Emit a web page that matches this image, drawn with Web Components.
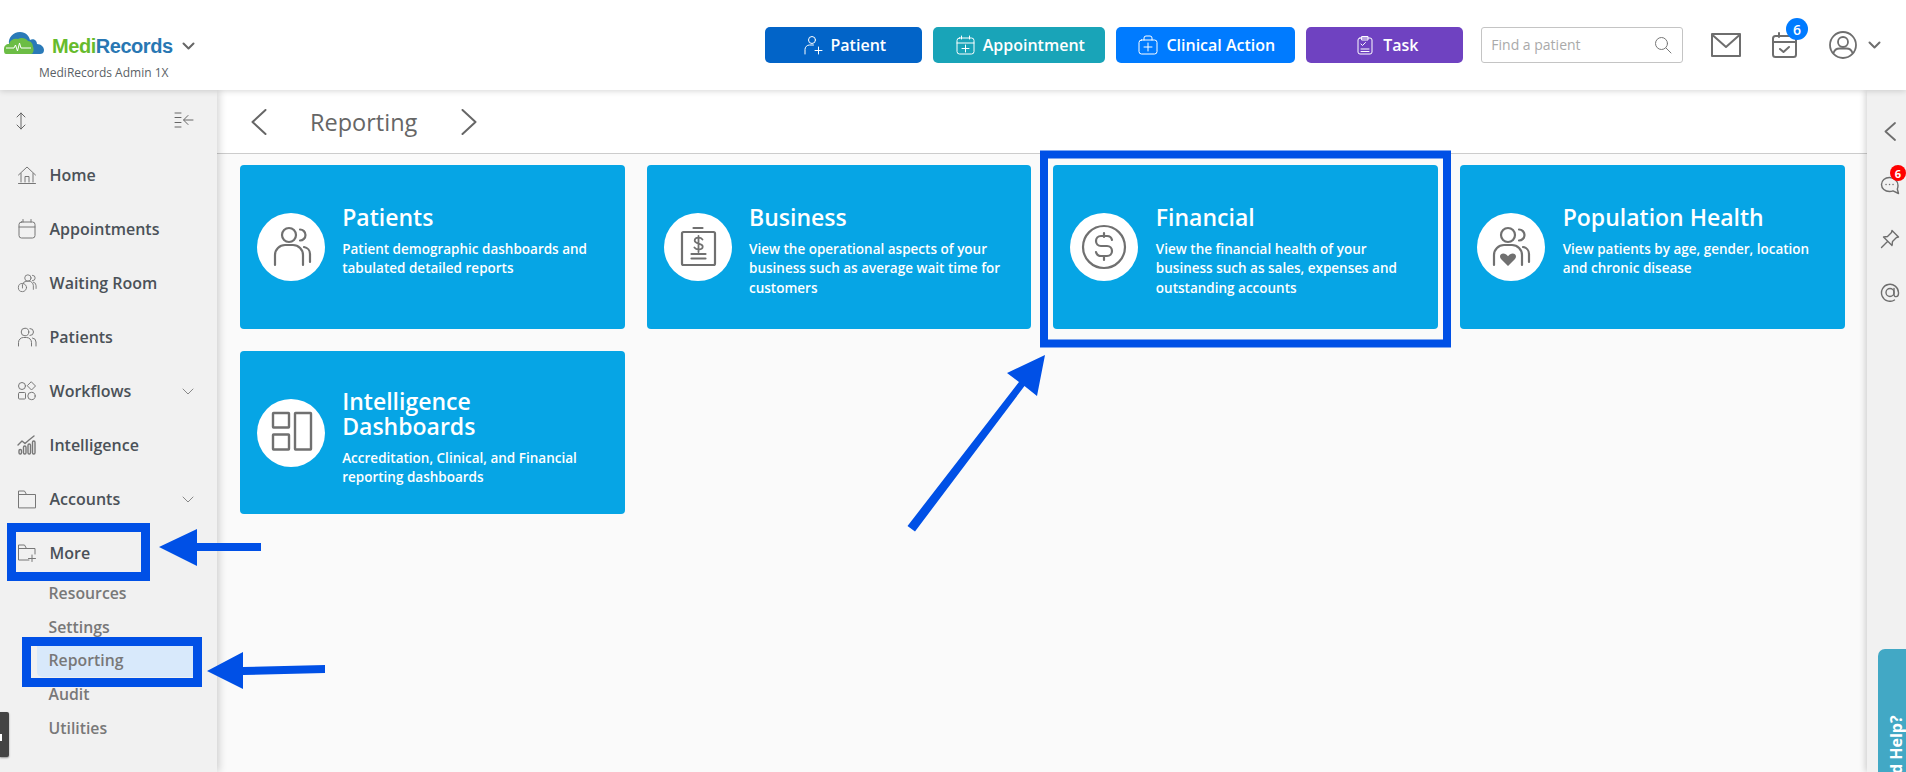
<!DOCTYPE html>
<html>
<head>
<meta charset="utf-8">
<title>Reporting</title>
<style>
    html, body { margin: 0; height: 100%; overflow: hidden; background: #fafafa; }
    body { display: flex; flex-direction: column; font-family: "Open Sans", "Noto Sans", sans-serif; }
    .below { flex: 1; display: flex; min-height: 0; }
</style>
</head>
<body>
<app-header></app-header>
<div class="below">
    <side-nav></side-nav>
    <report-page></report-page>
    <right-rail></right-rail>
</div>
<annotation-layer></annotation-layer>

<script>
const svg = (w, h, body, vb) => `<svg width="${w}" height="${h}" viewBox="${vb || `0 0 ${w} ${h}`}" fill="none" stroke="currentColor" stroke-linecap="round" stroke-linejoin="round">${body}</svg>`

const NAV_ICONS = {
    home: svg(20, 20, `<path d="M1.5 10 10 2l8.500 8M4 8.500V17M16 8.500V17M8 17v-5.500h4V17M1.500 18.500h17"/>`),
    appointments: svg(20, 22, `<rect x="2" y="4" width="16" height="16" rx="2.500"/><path d="M2 9h16M6 1.500V4M14 1.500V4"/>`),
    waiting: svg(22, 22, `<circle cx="12" cy="5.500" r="3.500"/><path d="M17 2.500a3 3 0 0 1 0 6M6 14v-1a5 5 0 0 1 5-4h2a5 5 0 0 1 5 5v4M18 10a4 4 0 0 1 3 4v3"/><circle cx="6" cy="16" r="4.500"/><path d="M6 14v2.500"/>`),
    patients: svg(20, 20, `<circle cx="8" cy="5" r="3.800"/><path d="M13 1.500a3.500 3.500 0 0 1 0 7M1.500 19v-3.500A5 5 0 0 1 6.500 10.500h3A5 5 0 0 1 14.500 15.500V19M15.500 11a4 4 0 0 1 3.500 4v4"/>`),
    workflows: svg(20, 20, `<circle cx="5" cy="5" r="3.500"/><path d="m14.500 1 4 4-4 4-4-4z"/><rect x="1.500" y="11.500" width="7" height="6.500" rx="1"/><circle cx="14.500" cy="15" r="3.700"/>`),
    intelligence: svg(20, 20, `<g stroke-width="1.400"><path d="M1 10l4-4 3 2.500 4-3.500 5-4"/><rect x="2" y="14.500" width="2.500" height="4.500" rx="1.200"/><rect x="6.500" y="11" width="2.500" height="8" rx="1.200"/><rect x="11" y="9" width="2.500" height="10" rx="1.200"/><rect x="15.500" y="6" width="2.500" height="13" rx="1.200"/></g>`),
    accounts: svg(20, 20, `<path d="M1.500 18.500V2h6l2 3.500h9v13zM1.500 5.500h8"/>`),
    more: svg(20, 20, `<path d="M12 17H1.500V2h6l2 3.500h8.500V11M1.500 5.500h8M15 12v6.500M11.500 15.500H18.500"/>`)
}

const CARD_ICONS = {
    patients: `<g stroke-width="2.200"><circle cx="32" cy="22" r="7"/><path d="M18 52V42a10 10 0 0 1 10-10h8a10 10 0 0 1 10 10v10M43 16.500a5.500 5.500 0 0 1 0 11M47 34a7 7 0 0 1 6 7v8"/></g>`,
    business: `<g stroke-width="2.200"><rect x="18" y="19" width="33" height="33" rx="1.500"/><path d="M29.500 15h9M27.500 41h14M27.500 45.500h14"/><path stroke-width="1.800" d="M38.500 26.500c-1-1.300-2.500-1.800-4-1.800-2.200 0-3.800 1.100-3.800 2.900 0 4 8 2 8 6 0 1.800-1.800 2.900-4 2.900-1.700 0-3.300-.6-4.300-2M34.500 23v16"/></g>`,
    financial: `<g stroke-width="2.200"><circle cx="34" cy="34" r="21"/><path d="M42 27c-.6-2.700-2.800-4-5-4h-6c-3 0-5 2.200-5 5s2 5 5 5h6c3 0 5 2.200 5 5s-2 5-5 5h-6c-2.400 0-4.500-1.400-5-4M34 20v4M34 43v4"/></g>`,
    population: `<g stroke-width="2.200"><circle cx="31" cy="22" r="7"/><path d="M17 52V42a10 10 0 0 1 10-10h8a10 10 0 0 1 10 10v10M42 16.500a5.500 5.500 0 0 1 0 11M46 34a7 7 0 0 1 6 7v8"/></g><path fill="currentColor" stroke="none" d="M31 53l-7-7c-2-2.200-.8-5.500 2.200-5.500 2 0 3.600 1 4.800 2.700 1.200-1.700 2.800-2.700 4.800-2.700 3 0 4.200 3.300 2.200 5.500z"/>`,
    dashboards: `<g stroke-width="2.400" stroke-linejoin="miter"><rect x="16" y="14" width="16" height="14.500" rx=".5"/><rect x="16" y="35.500" width="16" height="15" rx=".5"/><rect x="38" y="14" width="16" height="36.500" rx=".5"/></g>`
}

const BUTTON_ICONS = {
    patient: svg(19, 20, `<circle cx="8" cy="5" r="3.500"/><path d="M1 19v-4.500A4.500 4.500 0 0 1 5.500 10h4M11 15.500h7M14.500 12v7"/>`),
    appointment: svg(19, 20, `<rect x="1" y="3" width="17" height="16" rx="2.500"/><path d="M1 8h17M5.500 1v3M13.500 1v3M6 13.500h7M9.500 10v7"/>`),
    clinical: svg(20, 20, `<rect x="1" y="5" width="18" height="14" rx="2.500"/><path d="M6 5V3a2 2 0 0 1 2-2h4a2 2 0 0 1 2 2v2M6 12h8M10 8v8"/>`),
    task: svg(16, 20, `<rect x="1" y="3" width="14" height="16" rx="2"/><path d="M5 1.500h6V5H5zM4 9l1.500 1.500L8.500 7.500M4 14h8M4 16.500h8"/>`)
}

class AppHeader extends HTMLElement {
    constructor() {
        super()
        this.shadow = this.attachShadow({ mode: 'open' })
    }
    connectedCallback() {
        this.shadow.innerHTML = `
        <style>
            :host {
                display: flex;
                flex: none;
                height: 90px;
                position: relative;
                z-index: 3;
                background: #fff;
                box-shadow: 0 1px 6px rgba(0,0,0,.16);
                align-items: center;
                padding-right: 25px;
                box-sizing: border-box;
            }
            .brand { width: 200px; flex: none; align-self: flex-start; padding: 32px 0 0 4px; box-sizing: border-box; }
            .logo { display: flex; align-items: center; height: 28px; color: #666; }
            .logo > svg { align-self: flex-start; }
            .logo-name {
                font: bold 20px "Liberation Sans", sans-serif;
                letter-spacing: -.45px;
                margin-left: 8px;
                color: #2877b3;
            }
            .logo-name b { color: #66bb2c; }
            .logo .chev { margin-left: 9px; display: flex; }
            .org { font-size: 12px; color: #5a5f66; margin: 3.500px 0 0 35px; line-height: 17px; white-space: nowrap; }
            .actions { margin-left: auto; display: flex; align-items: center; }
            action-button + action-button { margin-left: 11px; }
            .search {
                width: 202px; height: 36px; box-sizing: border-box; margin-left: 18px;
                border: 1px solid #c4c4c4; border-radius: 3px;
                display: flex; align-items: center; padding: 0 10px 1px 9px;
                color: #aaa; font-size: 14px;
            }
            .search span { flex: 1; }
            .search svg { color: #777; }
            .ico { color: #6e6e6e; display: flex; }
            .mail { margin-left: 27.700px; }
            .cal { margin-left: 31px; position: relative; }
            .badge {
                position: absolute; left: 14px; top: -14px; width: 22px; height: 22px; border-radius: 50%;
                background: #007bff; color: #fff; font-size: 14px; font-weight: 600;
                display: flex; align-items: center; justify-content: center;
            }
            .user { margin-left: 32px; }
            .down { margin-left: 11px; }
        </style>
        <div class="brand">
            <div class="logo">
                <svg width="40" height="22" viewBox="0 0 40 22">
                    <path fill="#2a7ab8" d="M5 12C4 6 9 0 16 0c6 0 9 4 10 8 3-2 7 0 7 4 4 0 7 3 7 6 0 3-2 4-4 4H10z"/>
                    <path fill="#6cbd45" d="M2 22c-2 0-2-3-2-5 0-3 2-5 5-5 1-4 5-6 9-5 3-2 8-1 10 2 3 0 5 3 5 6 1 1 1 7-2 7z"/>
                    <path fill="none" stroke="#fff" stroke-width="1" d="M2 16h8l1.500-3 2 6 2-8 1.500 5h10"/>
                </svg>
                <span class="logo-name"><b>Medi</b>Records</span>
                <span class="chev">${svg(13, 8, `<path stroke-width="2" d="M1.500 1.500 6.500 6.500 11.500 1.500"/>`)}</span>
            </div>
            <div class="org">MediRecords Admin 1X</div>
        </div>
        <div class="actions">
            <action-button color="#0264c8" width="157" icon="patient" gap="8" shift="2">Patient</action-button>
            <action-button color="#19a4b8" width="172" icon="appointment" gap="8" shift="2">Appointment</action-button>
            <action-button color="#007bff" width="179" icon="clinical" gap="8" shift="2">Clinical Action</action-button>
            <action-button color="#6f42c1" width="157" icon="task" gap="10" shift="6">Task</action-button>
            <div class="search">
                <span>Find a patient</span>
                ${svg(18, 18, `<circle cx="7.500" cy="7.500" r="6"/><path d="m12 12 5 5"/>`)}
            </div>
            <div class="ico mail">${svg(30, 24, `<rect x="1" y="1" width="28" height="22" stroke-width="2"/><path stroke-width="2" d="M1.500 2 15 14 28.500 2"/>`)}</div>
            <div class="ico cal">
                ${svg(25, 26, `<rect x="1" y="4" width="23" height="21" rx="2.500" stroke-width="2"/><path stroke-width="2" d="M1 10h23M7 1v4M8 17l3.500 3L17 15"/>`)}
                <div class="badge">6</div>
            </div>
            <div class="ico user">${svg(28, 28, `<circle cx="14" cy="14" r="13" stroke-width="1.800"/><circle cx="14" cy="11" r="5" stroke-width="1.800"/><path stroke-width="1.800" d="M4.500 22c1-3.500 4-4.500 6-4.500h7c2 0 5 1 6 4.500"/>`)}</div>
            <div class="ico down">${svg(13, 8, `<path stroke-width="2" d="M1.500 1.500 6.500 6.500 11.500 1.500"/>`)}</div>
        </div>
        `
    }
}

class ActionButton extends HTMLElement {
    constructor() {
        super()
        this.shadow = this.attachShadow({ mode: 'open' })
    }
    connectedCallback() {
        this.shadow.innerHTML = `
        <style>
            :host {
                display: inline-flex;
                box-sizing: border-box;
                height: 36px;
                width: ${this.getAttribute('width')}px;
                padding-left: ${this.getAttribute('shift')}px;
                align-items: center;
                justify-content: center;
                gap: ${this.getAttribute('gap')}px;
                background: ${this.getAttribute('color')};
                color: #fff;
                border-radius: 5px;
                font-size: 16px;
                font-weight: 600;
            }
            svg { display: block; }
        </style>
        ${BUTTON_ICONS[this.getAttribute('icon')]}
        <slot></slot>
        `
    }
}

class NavItem extends HTMLElement {
    constructor() {
        super()
        this.shadow = this.attachShadow({ mode: 'open' })
    }
    connectedCallback() {
        const chevron = this.hasAttribute('expandable')
            ? `<span class="chev">${svg(12, 7, `<path d="M1 1l5 5 5-5"/>`)}</span>` : ''
        this.shadow.innerHTML = `
        <style>
            :host {
                display: flex;
                height: 54px;
                align-items: center;
                padding-left: 16.500px;
                color: #4b5158;
                font-size: 16px;
                font-weight: 600;
            }
            .icon { width: 20px; margin-right: 13px; color: #777; display: flex; justify-content: center; }
            .icon svg { display: block; }
            .chev { margin-left: auto; margin-right: 23px; color: #888; display: flex; }
        </style>
        <span class="icon">${NAV_ICONS[this.getAttribute('icon')]}</span>
        <slot></slot>
        ${chevron}
        `
    }
}

class SubItem extends HTMLElement {
    constructor() {
        super()
        this.shadow = this.attachShadow({ mode: 'open' })
    }
    connectedCallback() {
        this.shadow.innerHTML = `
        <style>
            :host {
                display: flex;
                height: 33.700px;
                align-items: center;
                margin-left: 37px;
                margin-right: 23px;
                padding-left: 11.500px;
                color: #787878;
                font-size: 15.800px;
                font-weight: 600;
                border-bottom-left-radius: 5px;
            }
            :host([active]) { background: #d8e9fb; }
        </style>
        <slot></slot>
        `
    }
}

class SideNav extends HTMLElement {
    constructor() {
        super()
        this.shadow = this.attachShadow({ mode: 'open' })
    }
    connectedCallback() {
        this.shadow.innerHTML = `
        <style>
            :host {
                display: block;
                flex: none;
                width: 217px;
                position: relative;
                z-index: 2;
                background: #f1f1f1;
                box-shadow: 2px 0 8px rgba(0,0,0,.18);
            }
            .tools {
                height: 58px;
                display: flex;
                justify-content: space-between;
                padding: 22px 23px 0 15px;
                box-sizing: border-box;
                color: #666;
            }
            .sub { margin-top: -4px; }
            .dock {
                position: absolute; left: 0; top: 622px; width: 9px; height: 45px;
                background: #444; border-radius: 0 2px 2px 0;
                box-shadow: 0 1px 2px rgba(0,0,0,.4);
            }
            .dock i { position: absolute; left: 0; top: 22px; width: 2px; height: 7px; background: #fff; }
        </style>
        <div class="tools">
            ${svg(12, 18, `<path d="M6 1v16M2 5l4-4 4 4M2 13l4 4 4-4"/>`)}
            ${svg(20, 16, `<path d="M1 1h6M1 5.500h6M1 10.500h6M1 15h6M19 8H10M14 3.500 9.500 8l4.500 4.500"/>`)}
        </div>
        <nav-item icon="home">Home</nav-item>
        <nav-item icon="appointments">Appointments</nav-item>
        <nav-item icon="waiting">Waiting Room</nav-item>
        <nav-item icon="patients">Patients</nav-item>
        <nav-item icon="workflows" expandable>Workflows</nav-item>
        <nav-item icon="intelligence">Intelligence</nav-item>
        <nav-item icon="accounts" expandable>Accounts</nav-item>
        <nav-item icon="more">More</nav-item>
        <div class="sub">
            <sub-item>Resources</sub-item>
            <sub-item>Settings</sub-item>
            <sub-item active>Reporting</sub-item>
            <sub-item>Audit</sub-item>
            <sub-item>Utilities</sub-item>
        </div>
        <div class="dock"><i></i></div>
        `
    }
}

class ReportCard extends HTMLElement {
    constructor() {
        super()
        this.shadow = this.attachShadow({ mode: 'open' })
    }
    connectedCallback() {
        this.shadow.innerHTML = `
        <style>
            :host {
                display: flex;
                align-items: center;
                background: #06a5e5;
                border-radius: 4px;
                color: #fff;
                padding-left: 17px;
            }
            .circle {
                flex: none;
                width: 68px;
                height: 68px;
                border-radius: 50%;
                background: #fff;
                color: #707070;
                margin-right: 17.500px;
            }
            .circle svg { display: block; }
            .text { align-self: flex-start; width: 256px; padding-top: var(--text-top, 39.500px); }
            h3 { margin: 0 0 10px; font-size: 23px; line-height: 25px; font-weight: 600; }
            p { margin: 0; font-size: 13.500px; line-height: 19.500px; font-weight: 600; }
        </style>
        <div class="circle">${svg(68, 68, CARD_ICONS[this.getAttribute('icon')])}</div>
        <div class="text">
            <h3>${this.getAttribute('title')}</h3>
            <p><slot></slot></p>
        </div>
        `
    }
}

class ReportPage extends HTMLElement {
    constructor() {
        super()
        this.shadow = this.attachShadow({ mode: 'open' })
    }
    connectedCallback() {
        this.shadow.innerHTML = `
        <style>
            :host { display: block; flex: 1; min-width: 0; background: #fafafa; }
            .bar {
                height: 64px;
                box-sizing: border-box;
                background: #fff;
                border-bottom: 1px solid #ccc;
                display: flex;
                align-items: center;
                padding-left: 34px;
                color: #666;
            }
            .bar span { font-size: 23.500px; margin: 0 44px 0 43px; font-weight: 500; }
            .grid {
                display: grid;
                grid-template-columns: repeat(4, 1fr);
                grid-template-rows: 164px 163px;
                gap: 22px;
                padding: 11px 22px 0 22.700px;
            }
            .grid report-card:last-child { --text-top: 37.500px; }
        </style>
        <div class="bar">
            ${svg(16, 26, `<path stroke-width="2" d="M14.500 1 1.500 13l13 12"/>`)}
            <span>Reporting</span>
            ${svg(16, 26, `<path stroke-width="2" d="M1.500 1l13 12-13 12"/>`)}
        </div>
        <div class="grid">
            <report-card icon="patients" title="Patients">Patient demographic dashboards and tabulated detailed reports</report-card>
            <report-card icon="business" title="Business">View the operational aspects of your business such as average wait time for customers</report-card>
            <report-card icon="financial" title="Financial">View the financial health of your business such as sales, expenses and outstanding accounts</report-card>
            <report-card icon="population" title="Population Health">View patients by age, gender, location and chronic disease</report-card>
            <report-card icon="dashboards" title="Intelligence Dashboards">Accreditation, Clinical, and Financial reporting dashboards</report-card>
        </div>
        `
    }
}

class RightRail extends HTMLElement {
    constructor() {
        super()
        this.shadow = this.attachShadow({ mode: 'open' })
    }
    connectedCallback() {
        this.shadow.innerHTML = `
        <style>
            :host {
                display: flex;
                flex-direction: column;
                flex: none;
                width: 39px;
                position: relative;
                z-index: 2;
                background: #f1f1f1;
                box-shadow: -2px 0 6px rgba(0,0,0,.16);
                color: #6e6e6e;
                padding-left: 13px;
                box-sizing: border-box;
            }
            .back { margin: 32px 0 0 4px; height: 19px; }
            .chat { margin-top: 35px; position: relative; height: 18px; }
            .pin { margin-top: 35px; height: 20px; }
            .at { margin-top: 34px; height: 19px; }
            svg { display: block; }
            .badge {
                position: absolute; left: 10px; top: -11px; width: 16px; height: 16px; border-radius: 50%;
                background: #f00; color: #fff; font-size: 11px; font-weight: 700;
                display: flex; align-items: center; justify-content: center;
            }
            .help {
                position: absolute; left: 11px; top: 559px; width: 36px; height: 190px;
                background: #42a8c5; border-radius: 7px 0 0 0;
                color: #fff; font-size: 16px; font-weight: 700;
                writing-mode: vertical-rl;
            }
            .help span {
                display: block; transform: rotate(180deg); margin-top: 66px; height: 124px;
                line-height: 36px; text-align: end; white-space: nowrap;
            }
        </style>
        <div class="back">${svg(12, 19, `<path stroke-width="1.800" d="M11 1 1.500 9.500 11 18"/>`)}</div>
        <div class="chat">
            ${svg(20, 19, `<path stroke-width="1.400" d="M9.500 1.500c-4.500 0-8 3-8 7s3.500 7 8 7c1.500 0 2.500-.2 3.500-.6l5.500 2.600-1.200-4.500c.5-1.200.7-2.300.7-3.500 0-4.500-4-8-8.500-8z"/><path stroke-width="1.400" d="M6 8.500h.1M9.500 8.500h.1M13 8.500h.1"/>`)}
            <div class="badge">6</div>
        </div>
        <div class="pin">${svg(20, 20, `<path stroke-width="1.400" d="M12 1.500 18.500 8l-2 .5L12.500 12.500l-.5 4L3.500 8l4-.5 4-4zM7 13l-5.500 5.500"/>`)}</div>
        <div class="at">${svg(20, 19, `<circle cx="10" cy="9.500" r="4" stroke-width="1.400"/><path stroke-width="1.400" d="M14 5.500v6c0 3 4.500 3 4.500-1V9.500a8.500 8.500 0 1 0-4 7.500"/>`)}</div>
        <div class="help"><span>Need Help?</span></div>
        `
    }
}

class AnnotationLayer extends HTMLElement {
    constructor() {
        super()
        this.shadow = this.attachShadow({ mode: 'open' })
    }
    connectedCallback() {
        this.shadow.innerHTML = `
        <style>
            :host { position: absolute; left: 0; top: 0; z-index: 5; display: block; pointer-events: none; }
            svg { display: block; }
        </style>
        <svg width="1906" height="772" viewBox="0 0 1906 772" fill="none">
            <g stroke="#0050e6" stroke-width="9">
                <rect x="11.500" y="527.500" width="134" height="49"/>
                <rect x="26.500" y="641.500" width="171" height="41"/>
                <rect x="1044" y="154.500" width="403" height="189" stroke-width="8"/>
            </g>
            <g fill="#0050e6">
                <path d="M159 547 197 529V543H261V551H197V566z"/>
                <path d="M207 671 243 652V667L325 665V673L243 675V689z"/>
                <path d="M1045 355 1037 396 1024.500 386 915 531.500 907.500 526 1019 382 1007 373z"/>
            </g>
        </svg>
        `
    }
}

customElements.define('action-button', ActionButton)
customElements.define('app-header', AppHeader)
customElements.define('nav-item', NavItem)
customElements.define('sub-item', SubItem)
customElements.define('side-nav', SideNav)
customElements.define('report-card', ReportCard)
customElements.define('report-page', ReportPage)
customElements.define('right-rail', RightRail)
customElements.define('annotation-layer', AnnotationLayer)
</script>
</body>
</html>
